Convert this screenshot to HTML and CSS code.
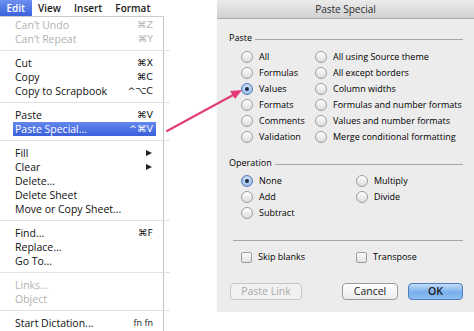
FILE: index.html
```html
<!DOCTYPE html>
<html lang="en">
<head>
  <meta charset="UTF-8" />
  <title>Paste Special</title>
  <link rel="stylesheet" href="styles.css">
</head>
<body>
  <div class="screen">
    <div class="menu">
      <div class="menubar">
        <span class="mb-item active">Edit</span>
        <span class="mb-item">View</span>
        <span class="mb-item">Insert</span>
        <span class="mb-item">Format</span>
      </div>
      <ul class="menu-list">
        <li class="mi disabled"><span>Can’t Undo</span><span class="key">⌘Z</span></li>
        <li class="mi disabled"><span>Can’t Repeat</span><span class="key">⌘Y</span></li>
        <li class="sep"></li>
        <li class="mi"><span>Cut</span><span class="key">⌘X</span></li>
        <li class="mi"><span>Copy</span><span class="key">⌘C</span></li>
        <li class="mi"><span>Copy to Scrapbook</span><span class="key">^⌥C</span></li>
        <li class="sep"></li>
        <li class="mi"><span>Paste</span><span class="key">⌘V</span></li>
        <li class="mi selected"><span>Paste Special...</span><span class="key">^⌘V</span></li>
        <li class="sep"></li>
        <li class="mi"><span>Fill</span><span class="sub"></span></li>
        <li class="mi"><span>Clear</span><span class="sub"></span></li>
        <li class="mi"><span>Delete...</span></li>
        <li class="mi"><span>Delete Sheet</span></li>
        <li class="mi"><span>Move or Copy Sheet...</span></li>
        <li class="sep"></li>
        <li class="mi"><span>Find...</span><span class="key">⌘F</span></li>
        <li class="mi"><span>Replace...</span></li>
        <li class="mi"><span>Go To...</span></li>
        <li class="sep"></li>
        <li class="mi disabled"><span>Links...</span></li>
        <li class="mi disabled"><span>Object</span></li>
        <li class="sep"></li>
        <li class="mi"><span>Start Dictation...</span><span class="key fn">fn fn</span></li>
      </ul>
    </div>

    <div class="dialog">
      <div class="titlebar">Paste Special</div>
      <div class="dialog-body">
        <div class="group-label"><span>Paste</span><i></i></div>
        <div class="opts paste-opts">
          <label class="opt"><span class="radio"></span>All</label>
          <label class="opt"><span class="radio"></span>All using Source theme</label>
          <label class="opt"><span class="radio"></span>Formulas</label>
          <label class="opt"><span class="radio"></span>All except borders</label>
          <label class="opt"><span class="radio on"></span>Values</label>
          <label class="opt"><span class="radio"></span>Column widths</label>
          <label class="opt"><span class="radio"></span>Formats</label>
          <label class="opt"><span class="radio"></span>Formulas and number formats</label>
          <label class="opt"><span class="radio"></span>Comments</label>
          <label class="opt"><span class="radio"></span>Values and number formats</label>
          <label class="opt"><span class="radio"></span>Validation</label>
          <label class="opt"><span class="radio"></span>Merge conditional formatting</label>
        </div>

        <div class="group-label op-label"><span>Operation</span><i></i></div>
        <div class="opts op-opts">
          <label class="opt"><span class="radio on"></span>None</label>
          <label class="opt"><span class="radio"></span>Multiply</label>
          <label class="opt"><span class="radio"></span>Add</label>
          <label class="opt"><span class="radio"></span>Divide</label>
          <label class="opt"><span class="radio"></span>Subtract</label>
        </div>

        <div class="divider"></div>

        <div class="opts op-opts checks">
          <label class="opt"><span class="check"></span>Skip blanks</label>
          <label class="opt"><span class="check"></span>Transpose</label>
        </div>

        <div class="buttons">
          <button class="btn" disabled>Paste Link</button>
          <button class="btn cancel">Cancel</button>
          <button class="btn default">OK</button>
        </div>
      </div>
    </div>

    <svg class="arrow" width="474" height="331" viewBox="0 0 474 331">
      <line x1="167" y1="131" x2="235" y2="94" stroke="#e23c78" stroke-width="2" stroke-linecap="round" />
      <path d="M242 90 L230 91 L235 99 Z" fill="#e23c78" />
    </svg>
  </div>
</body>
</html>
```

FILE: styles.css
```css
body { margin: 0; background: #fff; font-family: "Open Sans", "DejaVu Sans", sans-serif; color: #111; }
.screen { position: relative; width: 474px; height: 331px; display: flex; align-items: flex-start; overflow: hidden; }

/* menu */
.menu { width: 164px; flex: none; }
.menubar { display: flex; height: 16px; border-bottom: 1px solid #cbcbcb; font-size: 10px; line-height: 16px; }
.mb-item { padding: 0 6.5px; color: #1a1a1a; font-weight: 600; }
.mb-item.active { background: linear-gradient(#6c8ff0, #3c62dc); color: #fff; }
.menu-list { list-style: none; margin: 0; padding: 1px 0 0; border-right: 1px solid #c4c4c4; height: 314px; font-size: 10.5px; }
.mi { display: flex; justify-content: space-between; align-items: center; height: 14px; line-height: 14px; margin: 0 7px 0 13px; padding: 0 3px 0 2px; }
.mi.disabled { color: #b2b2b2; }
.mi.selected { background: linear-gradient(#6488ee, #3a5fdb); color: #fff; }
.key { font-family: "DejaVu Sans", sans-serif; font-size: 9.5px; }
.key.fn { font-family: "Open Sans", sans-serif; font-size: 9px; }
.sub { width: 0; height: 0; border-left: 6px solid #222; border-top: 3.5px solid transparent; border-bottom: 3.5px solid transparent; margin-right: 1px; }
.sep { height: 10px; margin: 0 -7px 0 -13px; background: linear-gradient(transparent 4px, #e2e2e2 4px, #e2e2e2 5px, transparent 5px); }

/* dialog */
.dialog { margin-left: 53px; width: 257px; height: 312px; background: #ececec; flex: none; }
.titlebar { height: 18px; line-height: 18px; border-bottom: 1px solid #a9a9a9; background: linear-gradient(#ebebeb, #d1d1d1); text-align: center; font-size: 10px; color: #2c2c2c; }
.dialog-body { padding: 12px 11px 0 12px; font-size: 9px; color: #000; }
.group-label { display: flex; align-items: center; height: 13px; line-height: 13px; }
.group-label i { flex: 1; height: 1px; background: #a6a6a6; margin: 3px 0 0 3px; }
.op-label { margin-top: 11px; }
.opts { display: grid; grid-template-columns: 74px auto; margin-left: 12px; }
.paste-opts { margin-top: 5px; }
.op-opts { grid-template-columns: 115px auto; margin-top: 4px; }
.opt { display: flex; align-items: center; height: 16px; line-height: 16px; gap: 6px; white-space: nowrap; }
.radio { width: 10px; height: 10px; border-radius: 50%; border: 1px solid #9c9c9c; background: linear-gradient(#fdfdfd, #dedede); flex: none; position: relative; }
.radio.on { border-color: #5779b3; background: radial-gradient(circle at 50% 35%, #d8e8fb, #86b0e8); }
.radio.on::after { content: ""; position: absolute; left: 3px; top: 3px; width: 4px; height: 4px; border-radius: 50%; background: #1d2b47; }
.check { width: 9px; height: 9px; border-radius: 2px; border: 1px solid #9c9c9c; background: linear-gradient(#fdfdfd, #e2e2e2); flex: none; }
.divider { height: 1px; background: #a6a6a6; margin: 19px 0 0 4px; }
.checks { margin-top: 8px; }
.buttons { display: flex; margin: 18px 0 0 1px; }
.btn { height: 17px; padding: 0; border-radius: 4px; font-family: "Open Sans", sans-serif; font-size: 10.5px; line-height: 15px; border: 1px solid #9b9b9b; background: linear-gradient(#ffffff, #ececec); color: #1b1b1b; }
.btn[disabled] { width: 72px; border-color: #c6c6c6; background: #f1f1f1; color: #a9a9a9; }
.btn.cancel { width: 56px; margin-left: auto; }
.btn.default { width: 55px; margin-left: 10px; border-color: #4c7cbd; background: linear-gradient(#c3ddf8, #79afec 55%, #8fbdf0); font-weight: 600; }

/* pointer arrow over the gap */
.arrow { position: absolute; left: 0; top: 0; pointer-events: none; }
```
